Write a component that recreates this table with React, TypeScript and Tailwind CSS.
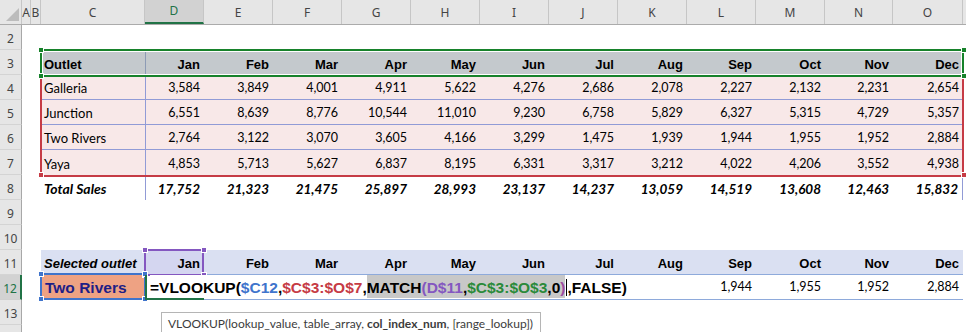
import React from "react";

const months = ["Jan", "Feb", "Mar", "Apr", "May", "Jun", "Jul", "Aug", "Sep", "Oct", "Nov", "Dec"];
const letters = ["D", "E", "F", "G", "H", "I", "J", "K", "L", "M", "N", "O"];
// widths of columns D..O
const W = [59, 69, 69, 69, 69, 69, 69, 69, 69, 69, 68, 70];

const outlets = [
  { name: "Galleria", v: ["3,584", "3,849", "4,001", "4,911", "5,622", "4,276", "2,686", "2,078", "2,227", "2,132", "2,231", "2,654"] },
  { name: "Junction", v: ["6,551", "8,639", "8,776", "10,544", "11,010", "9,230", "6,758", "5,829", "6,327", "5,315", "4,729", "5,357"] },
  { name: "Two Rivers", v: ["2,764", "3,122", "3,070", "3,605", "4,166", "3,299", "1,475", "1,939", "1,944", "1,955", "1,952", "2,884"] },
  { name: "Yaya", v: ["4,853", "5,713", "5,627", "6,837", "8,195", "6,331", "3,317", "3,212", "4,022", "4,206", "3,552", "4,938"] },
];

const totals = ["17,752", "21,323", "21,475", "25,897", "28,993", "23,137", "14,237", "13,059", "14,519", "13,608", "12,463", "15,832"];
const lookup = ["", "", "", "", "", "", "", "", "1,944", "1,955", "1,952", "2,884"];

const calibri = "font-['Lato','Liberation_Sans',sans-serif]";
const arial = "font-['Liberation_Sans',Arial,sans-serif]";

function Row({ n, active, children }: { n?: number; active?: boolean; children?: React.ReactNode }) {
  return (
    <div className="flex h-[25px] shrink-0">
      <div
        className={
          "flex w-[22px] shrink-0 items-center justify-center border-b border-r pt-[4px] text-[12px] font-['Noto_Sans',sans-serif] " +
          (active
            ? "border-b-[#d0d0d0] border-r-2 border-r-[#217346] bg-[#d2d2d2] text-[#217346]"
            : "border-b-[#d4d4d4] border-r-[#a8a8a8] bg-[#e6e6e6] text-[#444]")
        }
      >
        {n}
      </div>
      <div className="w-[19px] shrink-0" />
      {children}
    </div>
  );
}

function Handle({ className }: { className: string }) {
  return <div className={"absolute h-[6px] w-[6px] border border-white " + className} />;
}

export default function App() {
  return (
    <div className="relative h-[332px] w-[966px] overflow-hidden bg-white">
      {/* column headers */}
      <div className="flex h-[25px] border-b border-[#ababab] bg-[#e6e6e6] font-['Noto_Sans',sans-serif] text-[12px] text-[#444]">
        <div className="relative w-[22px] shrink-0 border-r border-[#c6c6c6]">
          <svg className="absolute left-[6px] top-[8px]" width="13" height="13" viewBox="0 0 13 13">
            <polygon points="13,0 13,13 0,13" fill="#bcbcbc" />
          </svg>
        </div>
        <div className="flex w-[9px] shrink-0 items-end justify-center border-r border-[#c6c6c6] pb-[2px]">A</div>
        <div className="flex w-[10px] shrink-0 items-end justify-center border-r border-[#c6c6c6] pb-[2px]">B</div>
        <div className="flex w-[104px] shrink-0 items-end justify-center border-r border-[#c6c6c6] pb-[2px]">C</div>
        {letters.map((l, i) => (
          <div
            key={l}
            style={{ width: W[i] }}
            className={
              "flex shrink-0 items-end justify-center border-r border-[#c6c6c6] pb-[2px] " +
              (l === "D" ? "border-b-2 border-b-[#217346] bg-[#d2d2d2] text-[#217346]" : "")
            }
          >
            {l}
          </div>
        ))}
        <div className="flex-1" />
      </div>

      <Row n={2} />

      {/* header row 3 */}
      <Row n={3}>
        <div className={"flex w-[104px] shrink-0 items-end bg-[#c4c9cd] pb-[1px] pl-[3px] text-[13px] font-bold text-black " + arial}>Outlet</div>
        {months.map((m, i) => (
          <div
            key={m}
            style={{ width: W[i] }}
            className={
              "flex shrink-0 items-end justify-end bg-[#c4c9cd] pb-[1px] pr-[4px] text-[13px] font-bold text-black " +
              arial +
              (i === 0 ? " border-l border-[#8d9bb5]" : "")
            }
          >
            {m}
          </div>
        ))}
      </Row>

      {outlets.map((o, r) => (
        <Row key={o.name} n={4 + r}>
          <div
            className={
              "flex w-[104px] shrink-0 items-end bg-[#f8e8e8] pb-[1px] pl-[3px] text-[13px] text-black " +
              calibri +
              (r < 3 ? " border-b border-[#919bd6]" : "")
            }
          >
            {o.name}
          </div>
          {o.v.map((v, i) => (
            <div
              key={i}
              style={{ width: W[i] }}
              className={
                "flex shrink-0 items-end justify-end bg-[#f8e8e8] pb-[1px] pr-[4px] text-[12.5px] text-black " +
                calibri +
                (r < 3 ? " border-b border-[#919bd6]" : "") +
                (i === 0 ? " border-l border-[#919bd6]" : "")
              }
            >
              {v}
            </div>
          ))}
        </Row>
      ))}

      {/* totals */}
      <Row n={8}>
        <div className={"flex w-[104px] shrink-0 items-end pb-[1px] pl-[3px] text-[14px] font-bold italic text-black " + calibri}>
          Total Sales
        </div>
        {totals.map((v, i) => (
          <div
            key={i}
            style={{ width: W[i] }}
            className={
              "flex shrink-0 items-end justify-end pb-[1px] pr-[4px] text-[13.5px] font-bold italic text-black " +
              calibri +
              (i === 0 ? " border-l border-[#919bd6]" : "") +
              (i === 11 ? " border-r border-[#919bd6]" : "")
            }
          >
            {v}
          </div>
        ))}
      </Row>

      <Row n={9} />
      <Row n={10} />

      {/* selected outlet header */}
      <Row n={11}>
        <div className={"flex w-[104px] shrink-0 items-end border-b border-[#8eaadb] bg-[#dae0f2] pb-[1px] pl-[3px] text-[13px] font-bold italic text-black " + arial}>
          Selected outlet
        </div>
        {months.map((m, i) => (
          <div
            key={m}
            style={{ width: W[i] }}
            className={
              "flex shrink-0 items-end justify-end border-b border-[#8eaadb] pb-[1px] pr-[4px] text-[13px] font-bold text-black " +
              arial +
              (i === 0 ? " bg-[#d4d6f0]" : " bg-[#dae0f2]")
            }
          >
            {m}
          </div>
        ))}
      </Row>

      {/* lookup row */}
      <Row n={12} active>
        <div className={"flex w-[104px] shrink-0 items-center bg-[#eea283] pl-[4px] pt-[1px] text-[15.5px] font-bold text-[#1e1e86] " + arial}>
          Two Rivers
        </div>
        {lookup.map((v, i) =>
          i === 0 ? (
            <div key={i} style={{ width: W[i] }} className="relative z-10 shrink-0 border-b-2 border-l-2 border-[#217346]">
              <div className={"absolute left-[3px] top-0 flex h-[23px] items-center whitespace-nowrap bg-white pr-[2px] pt-[2px] text-[15.5px] font-bold text-black " + arial}>
                <span>=VLOOKUP(</span>
                <span className="text-[#3f74cc]">$C12</span>
                <span>,</span>
                <span className="text-[#c63b45]">$C$3:$O$7</span>
                <span>,</span>
                <span className="-mt-[2px] flex h-[23px] items-center bg-[#c8c8c8] pt-[2px]">
                  <span>MATCH</span>
                  <span className="text-[#8457c0]">(D$11</span>
                  <span>,</span>
                  <span className="text-[#2a8a3a]">$C$3:$O$3</span>
                  <span>,0</span>
                  <span className="text-[#9c4aa0]">)</span>
                </span>
                <span className="ml-[1px] inline-block h-[17px] w-px bg-black" />
                <span>,FALSE)</span>
              </div>
            </div>
          ) : (
            <div
              key={i}
              style={{ width: W[i] }}
              className={
                "flex shrink-0 items-end justify-end border-b border-[#8eaadb] pb-[2px] pr-[4px] text-[12.5px] text-black " + calibri
              }
            >
              {v}
            </div>
          )
        )}
      </Row>

      <Row n={13} />
      <Row />

      {/* range reference boxes */}
      <div className="absolute left-[40px] top-[49px] h-[128px] w-[924px] border-2 border-[#c63b45]" />
      <Handle className="left-[38px] top-[172px] bg-[#c63b45]" />
      <Handle className="left-[961px] top-[172px] bg-[#c63b45]" />

      <div className="absolute left-[40px] top-[49px] h-[28px] w-[924px] border-2 border-[#17822b] shadow-[inset_0_0_0_1px_white]" />
      <Handle className="left-[38px] top-[47px] bg-[#17822b]" />
      <Handle className="left-[961px] top-[47px] bg-[#17822b]" />
      <Handle className="left-[38px] top-[73px] bg-[#17822b]" />
      <Handle className="left-[961px] top-[73px] bg-[#17822b]" />

      <div className="absolute left-[144px] top-[249px] h-[27px] w-[60px] border-2 border-[#8457c0]" />
      <Handle className="left-[142px] top-[247px] bg-[#8457c0]" />
      <Handle className="left-[201px] top-[247px] bg-[#8457c0]" />
      <Handle className="left-[142px] top-[272px] bg-[#8457c0]" />
      <Handle className="left-[201px] top-[272px] bg-[#8457c0]" />

      <div className="absolute left-[40px] top-[273px] h-[27px] w-[106px] border-2 border-[#3f74cc]" />
      <Handle className="left-[38px] top-[271px] bg-[#3f74cc]" />
      <Handle className="left-[142px] top-[271px] bg-[#3f74cc]" />
      <Handle className="left-[38px] top-[296px] bg-[#3f74cc]" />
      <Handle className="left-[142px] top-[296px] bg-[#3f74cc]" />
      <Handle className="left-[200px] top-[293px] bg-[#217346]" />

      {/* function tooltip */}
      <div className="absolute left-[161px] top-[312px] h-[24px] w-[380px] border border-[#b5b5b5] bg-white pl-[6px] pt-[2px] font-['Lato',sans-serif] text-[12px] text-[#3c3c3c]">
        VLOOKUP(lookup_value, table_array, <b>col_index_num</b>, [range_lookup])
      </div>
    </div>
  );
}
